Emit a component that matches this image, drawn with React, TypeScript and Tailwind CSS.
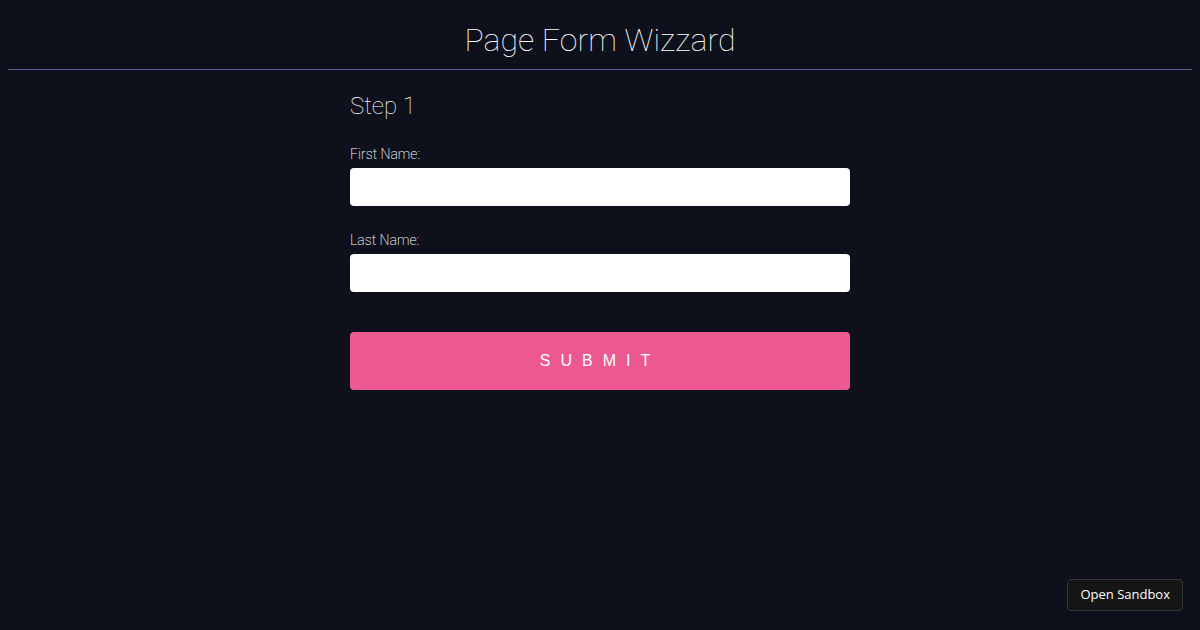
export default function App() {
  return (
    <main
      className="relative h-[630px] w-[1200px] overflow-hidden bg-[#0e101c] text-white"
      style={{ fontFamily: 'Roboto, "Liberation Sans", sans-serif' }}
    >
      {/* Header */}
      <header className="mx-2 border-b border-[#4f6294] pt-5 pb-[9px]">
        <h1 className="text-center text-[32px] leading-[40px] font-thin">Page Form Wizzard</h1>
      </header>

      {/* Form */}
      <form className="mx-auto mt-5 w-[500px]" onSubmit={(e) => e.preventDefault()}>
        <h2 className="text-2xl leading-8 font-thin">Step 1</h2>

        <label className="mt-[18px] block text-sm leading-7 font-extralight">First Name:</label>
        <input className="block h-[38px] w-full rounded bg-white px-4 text-sm text-black outline-none" />

        <label className="mt-5 block text-sm leading-7 font-extralight">Last Name:</label>
        <input className="block h-[38px] w-full rounded bg-white px-4 text-sm text-black outline-none" />

        <button
          type="submit"
          className="mt-10 block h-[58px] w-full rounded bg-[#ec5990] text-base font-thin tracking-[10px] text-white uppercase"
          style={{ fontFamily: '"Liberation Sans", Arial, sans-serif' }}
        >
          Submit
        </button>
      </form>

      {/* Sandbox link */}
      <button
        className="absolute right-[17px] bottom-[19px] h-8 rounded border border-[#353535] bg-[#151515] px-3 text-[13px] font-medium text-white"
        style={{ fontFamily: '"Open Sans", "Noto Sans", sans-serif' }}
      >
        Open Sandbox
      </button>
    </main>
  )
}
